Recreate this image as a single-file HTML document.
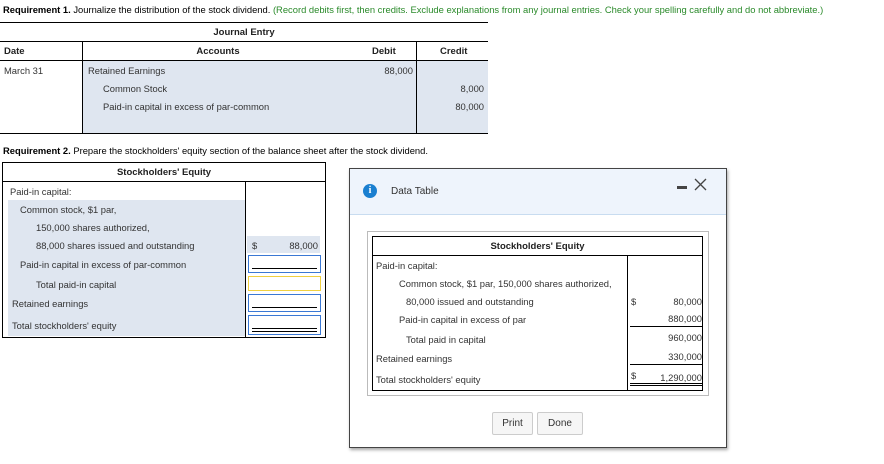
<!DOCTYPE html>
<html><head><meta charset="utf-8"><style>
body{margin:0;width:884px;height:464px;background:#fff;font-family:"Liberation Sans",Arial,sans-serif;font-size:9.4px;color:#333;position:relative;overflow:hidden}
.a{position:absolute;white-space:nowrap}
.b{font-weight:bold;color:#222;font-size:9.5px}
.bg{position:absolute;background:#dfe6f0}
.hl{position:absolute;height:1px;background:#000}
.vl{position:absolute;width:1px;background:#000}
.in{position:absolute;border:1px solid #3a78d4;background:#fff;box-sizing:border-box}
</style></head><body>
<div class="a" style="left:3px;top:4px;color:#000"><b>Requirement 1.</b> Journalize the distribution of the stock dividend. <span style="color:#2a8a2a">(Record debits first, then credits. Exclude explanations from any journal entries. Check your spelling carefully and do not abbreviate.)</span></div>
<div class="hl" style="left:0;top:22px;width:488px;height:1px"></div>
<div class="a b" style="left:0;width:488px;text-align:center;top:27px">Journal Entry</div>
<div class="hl" style="left:0;top:41px;width:488px"></div>
<div class="a b" style="left:4px;top:46px">Date</div>
<div class="a b" style="left:83px;width:270px;text-align:center;top:46px">Accounts</div>
<div class="a b" style="left:372px;top:46px">Debit</div>
<div class="a b" style="left:440px;top:46px">Credit</div>
<div class="hl" style="left:0;top:60px;width:488px"></div>
<div class="bg" style="left:83px;top:61px;width:405px;height:72px"></div>
<div class="vl" style="left:82px;top:41px;height:92px"></div>
<div class="vl" style="left:416px;top:41px;height:92px"></div>
<div class="hl" style="left:0;top:133px;width:488px"></div>
<div class="a" style="left:4px;top:65px">March 31</div>
<div class="a" style="left:88px;top:65px">Retained Earnings</div>
<div class="a" style="left:370px;width:43px;text-align:right;top:65px">88,000</div>
<div class="a" style="left:103px;top:83px">Common Stock</div>
<div class="a" style="left:430px;width:54px;text-align:right;top:83px">8,000</div>
<div class="a" style="left:103px;top:101px">Paid-in capital in excess of par-common</div>
<div class="a" style="left:430px;width:54px;text-align:right;top:101px">80,000</div>

<div class="a" style="left:3px;top:145px;color:#000"><b>Requirement 2.</b> Prepare the stockholders' equity section of the balance sheet after the stock dividend.</div>
<div class="a" style="left:2px;top:162px;width:322px;height:174px;border:1px solid #000"></div>
<div class="a b" style="left:2px;width:324px;text-align:center;top:167px">Stockholders' Equity</div>
<div class="hl" style="left:2px;top:181px;width:324px"></div>
<div class="vl" style="left:245px;top:181px;height:156px"></div>
<div class="bg" style="left:8px;top:200px;width:237px;height:136px"></div>
<div class="bg" style="left:247px;top:236px;width:73px;height:17px"></div>
<div class="a" style="left:10px;top:186px">Paid-in capital:</div>
<div class="a" style="left:20px;top:204px">Common stock, $1 par,</div>
<div class="a" style="left:36px;top:222px">150,000 shares authorized,</div>
<div class="a" style="left:36px;top:240px">88,000 shares issued and outstanding</div>
<div class="a" style="left:252px;top:240px">$</div>
<div class="a" style="left:280px;width:38px;text-align:right;top:240px">88,000</div>
<div class="a" style="left:20px;top:259px">Paid-in capital in excess of par-common</div>
<div class="a" style="left:36px;top:279px">Total paid-in capital</div>
<div class="a" style="left:12px;top:298px">Retained earnings</div>
<div class="a" style="left:12px;top:320px">Total stockholders' equity</div>
<div class="in" style="left:248px;top:255px;width:73px;height:18px"><div class="hl" style="left:3px;top:12px;width:65px"></div></div>
<div class="in" style="left:248px;top:276px;width:73px;height:15px;border-color:#f0d040"></div>
<div class="in" style="left:248px;top:294px;width:73px;height:18px"><div class="hl" style="left:3px;top:12px;width:65px"></div></div>
<div class="in" style="left:248px;top:315px;width:73px;height:20px"><div class="hl" style="left:3px;top:12px;width:65px"></div><div class="hl" style="left:3px;top:15px;width:65px"></div></div>

<div class="a" style="left:349px;top:168px;width:376px;height:278px;border:1px solid #444;box-shadow:1px 2px 3px rgba(0,0,0,.35);background:#fff"></div>
<div class="a" style="left:350px;top:169px;width:376px;height:45px;background:#eef4fc;border-bottom:1px solid #c8dcf0"></div>
<div class="a" style="left:363px;top:184px;width:14px;height:14px;border-radius:50%;background:#1a7fd0;color:#fff;font-weight:bold;font-size:10px;text-align:center;line-height:14px;font-family:'Liberation Serif',serif">i</div>
<div class="a" style="left:391px;top:186px;font-size:10px;color:#333">Data Table</div>
<div class="a" style="left:677px;top:186px;width:10px;height:3px;background:#444"></div>
<svg class="a" style="left:694px;top:178px" width="13" height="13" viewBox="0 0 13 13"><path d="M1 1L12 12M12 1L1 12" stroke="#444" stroke-width="1.3" fill="none"/></svg>
<div class="a" style="left:367px;top:231px;width:340px;height:163px;border:1px solid #bbb"></div>
<div class="a" style="left:372px;top:236px;width:329px;height:153px;border:1px solid #000"></div>
<div class="a b" style="left:372px;width:331px;text-align:center;top:241px">Stockholders' Equity</div>
<div class="hl" style="left:372px;top:255px;width:331px"></div>
<div class="vl" style="left:627px;top:255px;height:135px"></div>
<div class="a" style="left:376px;top:260px">Paid-in capital:</div>
<div class="a" style="left:399px;top:278px">Common stock, $1 par, 150,000 shares authorized,</div>
<div class="a" style="left:406px;top:296px">80,000 issued and outstanding</div>
<div class="a" style="left:631px;top:296px">$</div>
<div class="a" style="left:650px;width:52px;text-align:right;top:296px">80,000</div>
<div class="a" style="left:399px;top:314px">Paid-in capital in excess of par</div>
<div class="a" style="left:650px;width:52px;text-align:right;top:313px">880,000</div>
<div class="hl" style="left:630px;top:326px;width:72px"></div>
<div class="a" style="left:406px;top:334px">Total paid in capital</div>
<div class="a" style="left:650px;width:52px;text-align:right;top:332px">960,000</div>
<div class="a" style="left:376px;top:353px">Retained earnings</div>
<div class="a" style="left:650px;width:52px;text-align:right;top:351px">330,000</div>
<div class="hl" style="left:630px;top:364px;width:72px"></div>
<div class="a" style="left:376px;top:374px">Total stockholders' equity</div>
<div class="a" style="left:631px;top:370px">$</div>
<div class="a" style="left:650px;width:52px;text-align:right;top:372px">1,290,000</div>
<div class="hl" style="left:630px;top:383px;width:72px"></div>
<div class="hl" style="left:630px;top:385px;width:72px"></div>
<div class="a" style="left:492px;top:412px;width:39px;height:21px;border:1px solid #ccc;border-radius:2px;background:#f6f6f6;text-align:center;line-height:21px;font-size:10px">Print</div>
<div class="a" style="left:537px;top:412px;width:44px;height:21px;border:1px solid #ccc;border-radius:2px;background:#f6f6f6;text-align:center;line-height:21px;font-size:10px">Done</div>
</body></html>
